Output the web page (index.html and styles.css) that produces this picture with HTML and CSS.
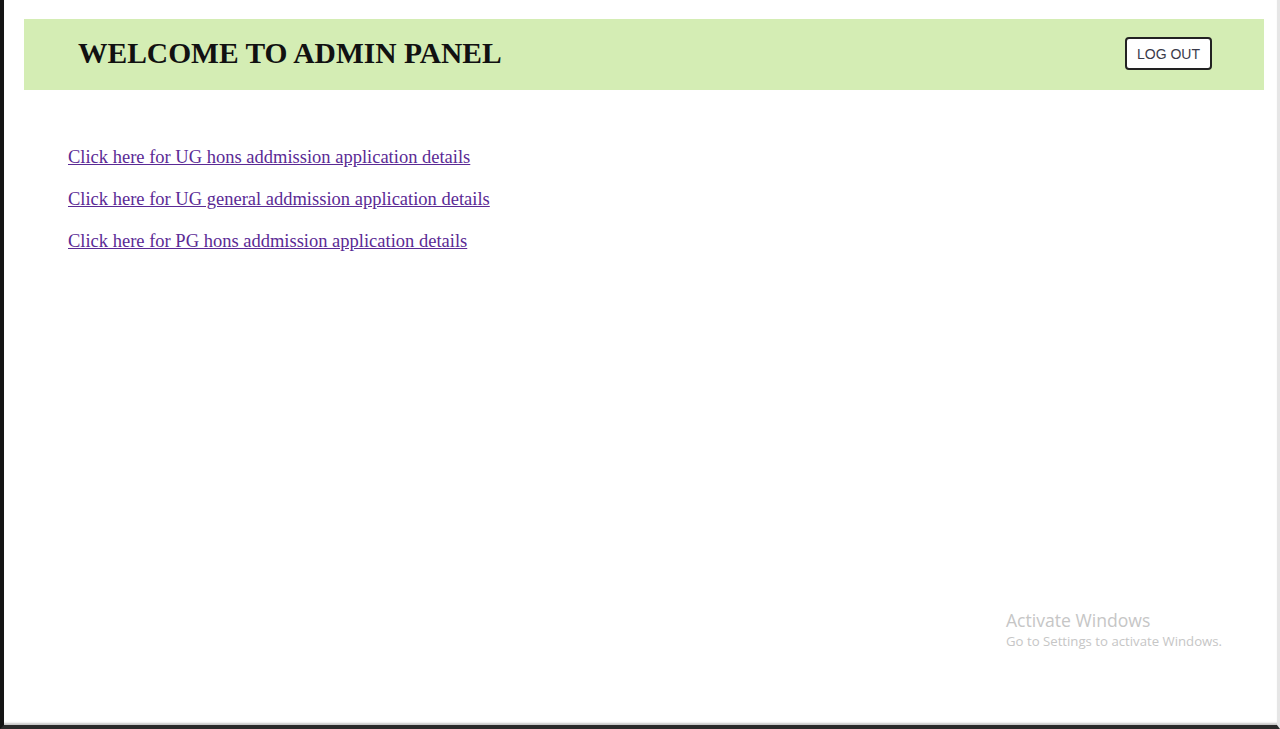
FILE: index.html
```html
<!DOCTYPE html>
<html>
<head>
<meta charset="utf-8">
<link rel="stylesheet" href="styles.css">
</head>
<body>
<div class="frame">
  <header class="topbar">
    <h1 class="title">WELCOME TO ADMIN PANEL</h1>
    <button class="logout">LOG OUT</button>
  </header>
  <nav class="links">
    <a href="#">Click here for UG hons addmission application details</a>
    <a href="#">Click here for UG general addmission application details</a>
    <a href="#">Click here for PG hons addmission application details</a>
  </nav>
  <div class="watermark">
    <div class="wm-title">Activate Windows</div>
    <div class="wm-sub">Go to Settings to activate Windows.</div>
  </div>
</div>
</body>
</html>
```

FILE: styles.css
```css
html, body {
  margin: 0;
  padding: 0;
  background: #ffffff;
}
.frame {
  position: relative;
  box-sizing: border-box;
  width: 1280px;
  height: 729px;
  border-left: 4px solid #141414;
  border-right: 3px solid #e6e6e6;
  border-bottom: 4px solid #2a2a2a;
  box-shadow: inset 0 -3px 2px -1px #c8c8c8;
  padding: 19px 13px 0 20px;
  overflow: hidden;
}
.topbar {
  display: flex;
  align-items: center;
  justify-content: space-between;
  height: 71px;
  background: #d4edb4;
  padding: 0 52px 0 54px;
  box-sizing: border-box;
}
.title {
  margin: 0;
  font-family: "Liberation Serif", serif;
  font-weight: bold;
  font-size: 29.5px;
  color: #111111;
  position: relative;
  top: -1px;
}
.logout {
  box-sizing: border-box;
  width: 87px;
  height: 33px;
  background: #ffffff;
  border: 2px solid #222222;
  border-radius: 4px;
  font-family: "Liberation Sans", Arial, sans-serif;
  font-size: 14px;
  color: #3a3a4a;
  padding: 0;
  position: relative;
  top: -1px;
}
.links {
  display: flex;
  flex-direction: column;
  align-items: flex-start;
  gap: 21px;
  padding: 57px 0 0 44px;
}
.links a {
  font-family: "Liberation Serif", serif;
  font-size: 18.5px;
  line-height: 21px;
  color: #5b2a95;
}
.watermark {
  position: absolute;
  left: 1002px;
  top: 609px;
  font-family: "Open Sans", "Noto Sans", sans-serif;
  color: #c6c6c6;
}
.wm-title {
  font-size: 17.6px;
  line-height: 22px;
}
.wm-sub {
  font-size: 13.2px;
  line-height: 20px;
}
```
